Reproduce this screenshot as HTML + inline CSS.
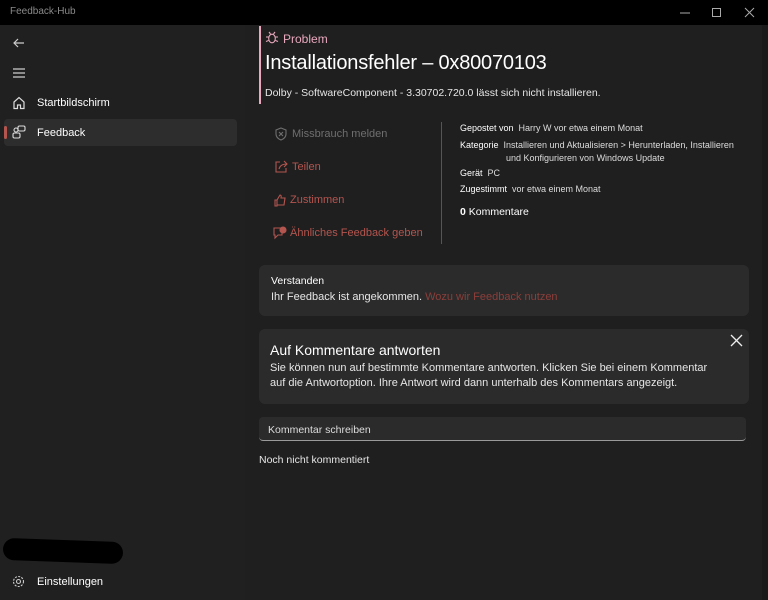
<!DOCTYPE html><html><head><style>
*{margin:0;padding:0;box-sizing:border-box}
body{width:768px;height:600px;overflow:hidden;background:#1f1f1f;font-family:"Segoe UI","Liberation Sans",sans-serif;color:#fff;position:relative}
.a{position:absolute;white-space:nowrap}
.tb{left:0;top:0;width:768px;height:25px;background:#000}
.side{left:0;top:25px;width:245px;height:575px;background:#202020}
.red{color:#b4554f}
.gray{color:#6f6f6f}
.card{position:absolute;background:#2b2b2b;border-radius:6px}
</style></head><body>
<div class="a tb"></div>
<div class="a" style="left:10px;top:6px;font-size:10px;color:#8a8a8a">Feedback-Hub</div>
<svg class="a" style="left:670px;top:7px" width="90" height="12" stroke="#aaa" fill="none" stroke-width="1"><path d="M10 6h10"/><rect x="42.5" y="1.5" width="8" height="8"/><path d="M75 1l9 9M84 1l-9 9"/></svg>
<div class="a side"></div>
<div class="a" style="left:762px;top:25px;width:6px;height:575px;background:#1a1a1a"></div>
<svg class="a" style="left:12px;top:37px" width="14" height="12" stroke="#ccc" fill="none" stroke-width="1.2"><path d="M12 6H2M6 2L2 6l4 4"/></svg>
<svg class="a" style="left:12px;top:67px" width="14" height="12" stroke="#ccc" stroke-width="1.2"><path d="M1 2h12M1 6h12M1 10h12"/></svg>
<svg class="a" style="left:12px;top:96px" width="14" height="14" stroke="#ddd" fill="none" stroke-width="1.2"><path d="M2 6L7 1.5 12 6v6.5H8.5V9h-3v3.5H2z"/></svg>
<div class="a" style="left:37px;top:97px;font-size:11px">Startbildschirm</div>
<div class="card" style="left:4px;top:119px;width:233px;height:27px;background:#2d2d2d;border-radius:4px"></div>
<div class="a" style="left:4px;top:126px;width:3px;height:13px;background:#b4554f;border-radius:2px"></div>
<svg class="a" style="left:12px;top:125px" width="14" height="14" stroke="#ddd" fill="none" stroke-width="1.1"><rect x="6" y="1" width="7" height="5" rx="1.5"/><circle cx="4" cy="5" r="2"/><rect x="1" y="8" width="7" height="5" rx="1.5"/></svg>
<div class="a" style="left:37px;top:127px;font-size:11px">Feedback</div>
<div class="a" style="left:3px;top:540px;width:120px;height:22px;background:#000;border-radius:12px;transform:rotate(2deg)"></div>
<svg class="a" style="left:12px;top:575px" width="13" height="13" stroke="#ccc" fill="none" stroke-width="1.1"><circle cx="6.5" cy="6.5" r="2"/><circle cx="6.5" cy="6.5" r="5" stroke-dasharray="2 1.3"/></svg>
<div class="a" style="left:37px;top:576px;font-size:11px">Einstellungen</div>

<div class="a" style="left:259px;top:26px;width:2px;height:78px;background:#e8a8be"></div>
<svg class="a" style="left:265px;top:30px" width="14" height="14" stroke="#e8a8be" fill="none" stroke-width="1.1"><ellipse cx="7" cy="8.5" rx="3.3" ry="4.3"/><path d="M4 2l1.5 2M10 2L8.5 4M1 7h2.5M10.5 7H13M1 11.5l2.5-1M13 11.5l-2.5-1"/></svg>
<div class="a" style="left:283px;top:32px;font-size:12px;color:#e8a8be">Problem</div>
<div class="a" style="left:265px;top:52px;font-size:20px;letter-spacing:-0.2px">Installationsfehler – 0x80070103</div>
<div class="a" style="left:265px;top:87px;font-size:10.5px;color:#e6e6e6">Dolby - SoftwareComponent - 3.30702.720.0 lässt sich nicht installieren.</div>

<svg class="a" style="left:274px;top:127px" width="14" height="14" stroke="#6f6f6f" fill="none" stroke-width="1.1"><path d="M7 1l5 2v4c0 3-2.5 5-5 6-2.5-1-5-3-5-6V3z"/><path d="M5 5l4 4M9 5L5 9"/></svg>
<div class="a gray" style="left:292px;top:128px;font-size:11px">Missbrauch melden</div>
<svg class="a" style="left:274px;top:160px" width="14" height="14" stroke="#b4554f" fill="none" stroke-width="1.1"><path d="M6 2H2v10h10V8"/><path d="M5 9c1-4 4-5 8-5M10 1l3 3-3 3"/></svg>
<div class="a red" style="left:292px;top:161px;font-size:11px">Teilen</div>
<svg class="a" style="left:273px;top:193px" width="14" height="14" stroke="#b4554f" fill="none" stroke-width="1.1"><path d="M2 7h2v6H2zM4 7l3-5c1 0 1.5 1 1 3h4l-1 7H4"/></svg>
<div class="a red" style="left:290px;top:194px;font-size:11px">Zustimmen</div>
<svg class="a" style="left:273px;top:226px" width="14" height="14" stroke="#b4554f" fill="none" stroke-width="1.1"><path d="M1 2h8v7H5l-3 3V9H1z"/><circle cx="10" cy="4" r="3" fill="#b4554f"/></svg>
<div class="a red" style="left:290px;top:227px;font-size:11px">Ähnliches Feedback geben</div>

<div class="a" style="left:441px;top:122px;width:1px;height:122px;background:#555"></div>
<div class="a" style="left:460px;top:123px;font-size:9px;color:#ddd"><span style="color:#fff">Gepostet von</span>&nbsp; Harry W vor etwa einem Monat</div>
<div class="a" style="left:460px;top:139px;font-size:9px;color:#ddd;line-height:12.5px"><span style="color:#fff">Kategorie</span>&nbsp; Installieren und Aktualisieren &gt; Herunterladen, Installieren<br><span style="padding-left:46px">und Konfigurieren von Windows Update</span></div>
<div class="a" style="left:460px;top:168px;font-size:9px;color:#ddd"><span style="color:#fff">Gerät</span>&nbsp; PC</div>
<div class="a" style="left:460px;top:184px;font-size:9px;color:#ddd"><span style="color:#fff">Zugestimmt</span>&nbsp; vor etwa einem Monat</div>
<div class="a" style="left:460px;top:206px;font-size:10.5px"><b>0</b> Kommentare</div>

<div class="card" style="left:259px;top:265px;width:490px;height:51px"></div>
<div class="a" style="left:271px;top:275px;font-size:10.5px">Verstanden</div>
<div class="a" style="left:271px;top:291px;font-size:11px;color:#e6e6e6">Ihr Feedback ist angekommen. <span style="color:#8c3e3a">Wozu wir Feedback nutzen</span></div>

<div class="card" style="left:259px;top:329px;width:490px;height:75px"></div>
<svg class="a" style="left:730px;top:334px" width="13" height="13" stroke="#eee" stroke-width="1.3"><path d="M1 1l11 11M12 1L1 12"/></svg>
<div class="a" style="left:270px;top:342px;font-size:14px">Auf Kommentare antworten</div>
<div class="a" style="left:270px;top:361px;font-size:11px;line-height:14.5px;color:#e6e6e6">Sie können nun auf bestimmte Kommentare antworten. Klicken Sie bei einem Kommentar<br>auf die Antwortoption. Ihre Antwort wird dann unterhalb des Kommentars angezeigt.</div>

<div class="card" style="left:259px;top:417px;width:487px;height:24px;border-radius:4px;border-bottom:1px solid #9a9a9a"></div>
<div class="a" style="left:268px;top:424px;font-size:10.5px;color:#ddd">Kommentar schreiben</div>
<div class="a" style="left:259px;top:454px;font-size:10.5px;color:#e6e6e6">Noch nicht kommentiert</div>
</body></html>
